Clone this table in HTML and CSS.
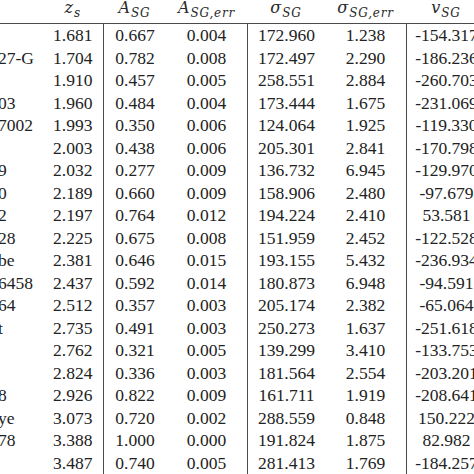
FILE: index.html
```html
<!DOCTYPE html>
<html>
<head>
<meta charset="utf-8">
<link rel="stylesheet" href="styles.css">
</head>
<body>
<div class="table">
  <div class="row head">
    <div class="cell name"></div>
    <div class="cell"><span class="math">z<sub>s</sub></span></div>
    <div class="cell"><span class="math">A<sub>SG</sub></span></div>
    <div class="cell"><span class="math">A<sub>SG,err</sub></span></div>
    <div class="cell"><span class="math">σ<sub>SG</sub></span></div>
    <div class="cell"><span class="math">σ<sub>SG,err</sub></span></div>
    <div class="cell"><span class="math">v<sub>SG</sub></span></div>
  </div>
  <div class="body">
    <div class="row"><div class="cell name"></div><div class="cell">1.681</div><div class="cell vl">0.667</div><div class="cell">0.004</div><div class="cell vl">172.960</div><div class="cell">1.238</div><div class="cell vl">-154.317</div></div>
    <div class="row"><div class="cell name">27-G</div><div class="cell">1.704</div><div class="cell vl">0.782</div><div class="cell">0.008</div><div class="cell vl">172.497</div><div class="cell">2.290</div><div class="cell vl">-186.236</div></div>
    <div class="row"><div class="cell name"></div><div class="cell">1.910</div><div class="cell vl">0.457</div><div class="cell">0.005</div><div class="cell vl">258.551</div><div class="cell">2.884</div><div class="cell vl">-260.703</div></div>
    <div class="row"><div class="cell name">03</div><div class="cell">1.960</div><div class="cell vl">0.484</div><div class="cell">0.004</div><div class="cell vl">173.444</div><div class="cell">1.675</div><div class="cell vl">-231.069</div></div>
    <div class="row"><div class="cell name">7002</div><div class="cell">1.993</div><div class="cell vl">0.350</div><div class="cell">0.006</div><div class="cell vl">124.064</div><div class="cell">1.925</div><div class="cell vl">-119.330</div></div>
    <div class="row"><div class="cell name"></div><div class="cell">2.003</div><div class="cell vl">0.438</div><div class="cell">0.006</div><div class="cell vl">205.301</div><div class="cell">2.841</div><div class="cell vl">-170.798</div></div>
    <div class="row"><div class="cell name">9</div><div class="cell">2.032</div><div class="cell vl">0.277</div><div class="cell">0.009</div><div class="cell vl">136.732</div><div class="cell">6.945</div><div class="cell vl">-129.970</div></div>
    <div class="row"><div class="cell name">0</div><div class="cell">2.189</div><div class="cell vl">0.660</div><div class="cell">0.009</div><div class="cell vl">158.906</div><div class="cell">2.480</div><div class="cell vl">-97.679</div></div>
    <div class="row"><div class="cell name">2</div><div class="cell">2.197</div><div class="cell vl">0.764</div><div class="cell">0.012</div><div class="cell vl">194.224</div><div class="cell">2.410</div><div class="cell vl">53.581</div></div>
    <div class="row"><div class="cell name">28</div><div class="cell">2.225</div><div class="cell vl">0.675</div><div class="cell">0.008</div><div class="cell vl">151.959</div><div class="cell">2.452</div><div class="cell vl">-122.528</div></div>
    <div class="row"><div class="cell name">be</div><div class="cell">2.381</div><div class="cell vl">0.646</div><div class="cell">0.015</div><div class="cell vl">193.155</div><div class="cell">5.432</div><div class="cell vl">-236.934</div></div>
    <div class="row"><div class="cell name">6458</div><div class="cell">2.437</div><div class="cell vl">0.592</div><div class="cell">0.014</div><div class="cell vl">180.873</div><div class="cell">6.948</div><div class="cell vl">-94.591</div></div>
    <div class="row"><div class="cell name">64</div><div class="cell">2.512</div><div class="cell vl">0.357</div><div class="cell">0.003</div><div class="cell vl">205.174</div><div class="cell">2.382</div><div class="cell vl">-65.064</div></div>
    <div class="row"><div class="cell name">t</div><div class="cell">2.735</div><div class="cell vl">0.491</div><div class="cell">0.003</div><div class="cell vl">250.273</div><div class="cell">1.637</div><div class="cell vl">-251.618</div></div>
    <div class="row"><div class="cell name"></div><div class="cell">2.762</div><div class="cell vl">0.321</div><div class="cell">0.005</div><div class="cell vl">139.299</div><div class="cell">3.410</div><div class="cell vl">-133.753</div></div>
    <div class="row"><div class="cell name"></div><div class="cell">2.824</div><div class="cell vl">0.336</div><div class="cell">0.003</div><div class="cell vl">181.564</div><div class="cell">2.554</div><div class="cell vl">-203.201</div></div>
    <div class="row"><div class="cell name">8</div><div class="cell">2.926</div><div class="cell vl">0.822</div><div class="cell">0.009</div><div class="cell vl">161.711</div><div class="cell">1.919</div><div class="cell vl">-208.641</div></div>
    <div class="row"><div class="cell name">ye</div><div class="cell">3.073</div><div class="cell vl">0.720</div><div class="cell">0.002</div><div class="cell vl">288.559</div><div class="cell">0.848</div><div class="cell vl">150.222</div></div>
    <div class="row"><div class="cell name">78</div><div class="cell">3.388</div><div class="cell vl">1.000</div><div class="cell">0.000</div><div class="cell vl">191.824</div><div class="cell">1.875</div><div class="cell vl">82.982</div></div>
    <div class="row"><div class="cell name"></div><div class="cell">3.487</div><div class="cell vl">0.740</div><div class="cell">0.005</div><div class="cell vl">281.413</div><div class="cell">1.769</div><div class="cell vl">-184.257</div></div>
  </div>
</div>
</body>
</html>
```

FILE: styles.css
```css
html, body {
  margin: 0;
  padding: 0;
  background: #ffffff;
  overflow: hidden;
}

body {
  width: 474px;
  height: 474px;
  font-family: "Liberation Serif", "Times New Roman", serif;
  font-size: 17.5px;
  color: #222222;
}

.table {
  width: 486px;
}

.row {
  display: grid;
  grid-template-columns: 42.5px 60.5px 63px 81px 78px 81px 80px;
  height: 22.53px;
  line-height: 22.53px;
}

.head {
  height: 23px;
  line-height: 14px;
  padding-bottom: 9px;
  box-sizing: border-box;
}

.body {
  border-top: 1.5px solid #4a4a4a;
}

.cell {
  text-align: center;
  white-space: nowrap;
  box-sizing: border-box;
}

.name {
  text-align: left;
  overflow: hidden;
  text-indent: -2px;
}

.vl {
  border-left: 1.5px solid #4a4a4a;
}

.math {
  font-family: "DejaVu Serif", "Liberation Serif", serif;
  font-style: italic;
  font-size: 16px;
  color: #2a2a2a;
}

.math sub {
  font-size: 12px;
  vertical-align: -0.3em;
  line-height: 0;
  letter-spacing: 0.8px;
  padding-left: 1px;
}
```
